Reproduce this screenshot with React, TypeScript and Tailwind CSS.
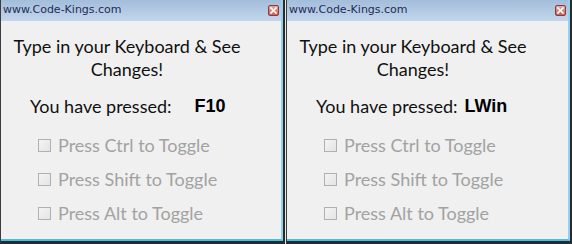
import React from 'react'

const bodyFont = { fontFamily: 'Lato, "Open Sans", sans-serif' }

function CloseButton() {
  return (
    <div className="w-[11px] h-[11px] rounded-[2px] border border-[#8c3a3a] bg-gradient-to-b from-[#e8a4a0] to-[#c8605a] flex items-center justify-center">
      <svg width="7" height="7" viewBox="0 0 7 7">
        <path d="M1 1 L6 6 M6 1 L1 6" stroke="#ffffff" strokeWidth="1.6" strokeLinecap="square" />
      </svg>
    </div>
  )
}

function Toggle({ label }: { label: string }) {
  return (
    <div className="flex items-center h-[34px] pl-[37px] gap-[7px]">
      <div className="w-[13px] h-[13px] border border-[#b0b0b0] bg-gradient-to-br from-[#f4f4f4] to-[#e4e4e4]" />
      <span className="text-[18px] leading-[22px] text-[#a2a2a2]" style={bodyFont}>
        {label}
      </span>
    </div>
  )
}

function KeyWindow({ pressed, keyGap, gapRight }: { pressed: string; keyGap: string; gapRight: boolean }) {
  return (
    <div className={`flex ${gapRight ? 'w-[286px] border-r border-r-[#e8e8e8]' : 'w-[286px]'} h-[244px]`}>
      <div className="flex-1 flex flex-col border-l border-l-[#3c3c3c] border-r-2 border-r-[#2a2a2a] border-b-[3px] border-b-[#2a2a2a]">
        <div className="flex-1 flex flex-col border-r-2 border-r-[#8fd2ee] border-b-2 border-b-[#40c0ee]">
          <div className="h-[21px] flex items-center justify-between pl-[2px] pr-[2px] bg-gradient-to-b from-[#a3bddb] to-[#c4d6ec]">
            <span className="text-[11px] text-[#1e2c56]" style={{ fontFamily: '"DejaVu Sans", Verdana, sans-serif' }}>
              www.Code-Kings.com
            </span>
            <CloseButton />
          </div>
          <div className="flex-1 flex flex-col bg-[#f0f0f0]">
            <div className="w-[228px] ml-[12px] mt-[14px] text-center text-[18px] leading-[23px] text-[#101010]" style={bodyFont}>
              Type in your Keyboard &amp; See Changes!
            </div>
            <div className="flex items-center h-[24px] mt-[13px] pl-[29px]">
              <span className="text-[18px] text-[#101010]" style={bodyFont}>You have pressed:</span>
              <span className={`${keyGap} text-[18px] font-bold text-black`} style={{ fontFamily: '"Liberation Sans", Arial, sans-serif' }}>
                {pressed}
              </span>
            </div>
            <div className="mt-[10px] flex flex-col">
              <Toggle label="Press Ctrl to Toggle" />
              <Toggle label="Press Shift to Toggle" />
              <Toggle label="Press Alt to Toggle" />
            </div>
          </div>
        </div>
      </div>
    </div>
  )
}

export default function App() {
  return (
    <div className="flex w-[572px] h-[244px] bg-[#f0f0f0] overflow-hidden">
      <KeyWindow pressed="F10" keyGap="ml-[23px]" gapRight />
      <KeyWindow pressed="LWin" keyGap="ml-[7px]" gapRight={false} />
    </div>
  )
}
